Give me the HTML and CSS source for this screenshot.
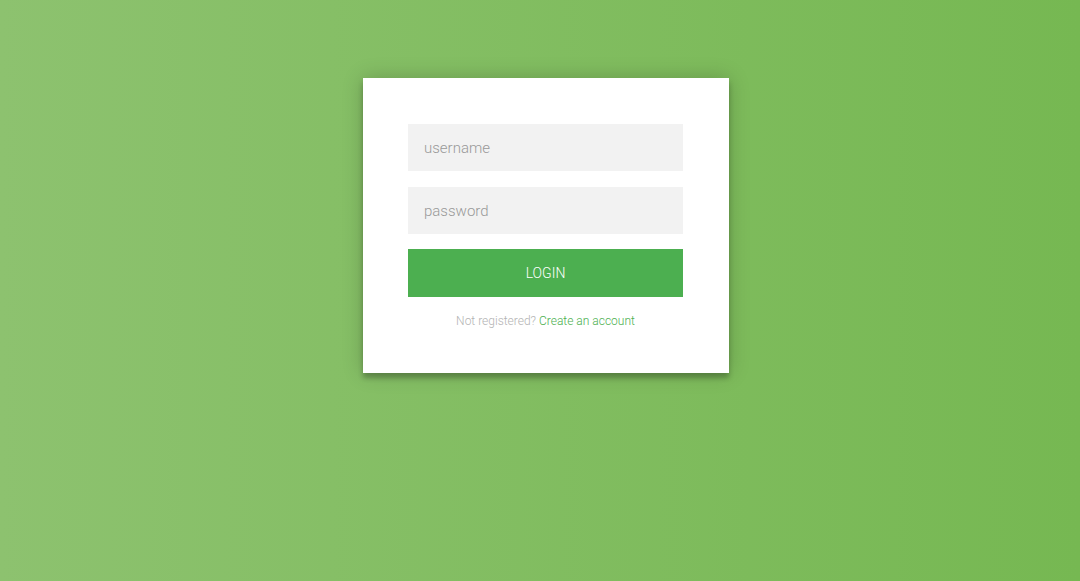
FILE: index.html
```html
<!DOCTYPE html>
<html lang="en">
<head>
<meta charset="utf-8">
<title>Login</title>
<link rel="stylesheet" href="styles.css">
</head>
<body>
  <div class="login-page">
    <form class="form">
      <input class="field" type="text" placeholder="username">
      <input class="field field-last" type="password" placeholder="password">
      <button class="submit" type="button">login</button>
      <p class="message">Not registered? <a href="#">Create an account</a></p>
    </form>
  </div>
</body>
</html>
```
FILE: styles.css
```css
html, body {
  margin: 0;
  height: 100%;
}

body {
  background: linear-gradient(to right, #8dc26f, #76b852);
  font-family: Roboto, "Liberation Sans", sans-serif;
  font-weight: 300;
}

.login-page {
  width: 366px;
  padding-top: 78px;
  margin-left: calc(50% - 177px);
}

.form {
  box-sizing: border-box;
  width: 366px;
  background: #fff;
  padding: 46px 46px 45px 45px;
  text-align: center;
  box-shadow: 0 0 20px rgba(0, 0, 0, 0.2), 0 5px 5px rgba(0, 0, 0, 0.24);
}

.field {
  display: block;
  box-sizing: border-box;
  width: 100%;
  height: 47px;
  margin: 0 0 16px;
  padding: 0 16px;
  border: 0;
  outline: 0;
  background: #f2f2f2;
  font-family: Roboto, "Liberation Sans", sans-serif;
  font-weight: 300;
  font-size: 15px;
  color: #333;
}

.field-last {
  margin-bottom: 15px;
}

.field::placeholder {
  color: #999;
}

.submit {
  display: block;
  width: 100%;
  height: 48px;
  margin: 0;
  border: 0;
  outline: 0;
  background: #4caf50;
  color: #fff;
  font-family: Roboto, "Liberation Sans", sans-serif;
  font-weight: 300;
  font-size: 14px;
  text-transform: uppercase;
  cursor: pointer;
}

.message {
  margin: 17px 0 0;
  color: #b3b3b3;
  font-size: 12px;
  line-height: 14px;
}

.message a {
  color: #4caf50;
  text-decoration: none;
}
```
